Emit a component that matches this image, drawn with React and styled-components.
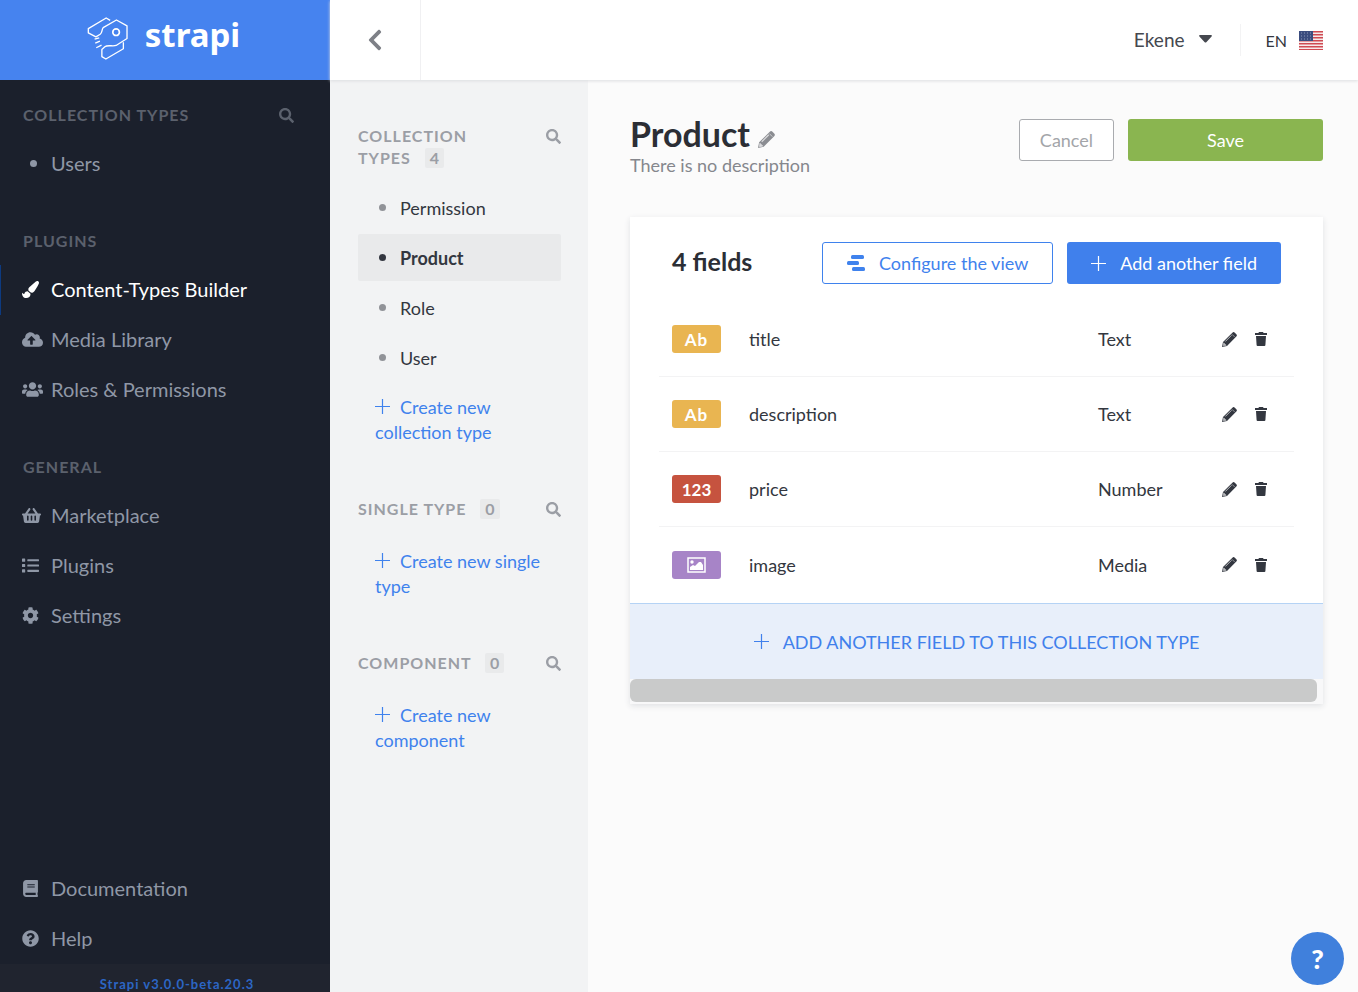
import styled, { createGlobalStyle } from "styled-components";
import {
  FaBook,
  FaChevronLeft,
  FaCloudUploadAlt,
  FaCog,
  FaList,
  FaPaintBrush,
  FaQuestionCircle,
  FaSearch,
  FaShoppingBasket,
  FaUsers,
} from "react-icons/fa";

const GlobalStyle = createGlobalStyle`
  * {
    box-sizing: border-box;
  }
  body {
    margin: 0;
    font-family: Lato, "Open Sans", sans-serif;
    font-size: 18px;
    color: #333740;
    background: #fbfbfb;
  }
  button {
    font: inherit;
    cursor: pointer;
  }
  a {
    text-decoration: none;
  }
  ul {
    list-style: none;
    margin: 0;
    padding: 0;
  }
  svg {
    display: block;
    flex: none;
  }
`;

const Page = styled.div`
  display: grid;
  grid-template-columns: 330px minmax(0, 1fr);
  min-height: 100vh;
`;

/* left menu */

const Sidebar = styled.nav`
  display: flex;
  flex-direction: column;
  background: #1b202c;
`;

const Brand = styled.a`
  display: flex;
  align-items: center;
  justify-content: center;
  gap: 16px;
  height: 80px;
  padding: 0 4px 4px 0;
  color: #ffffff;
  background: #4683ef;
`;

const BrandName = styled.span`
  padding-bottom: 6px;
  font-family: "Noto Sans", sans-serif;
  font-size: 33px;
  font-weight: 700;
  line-height: 40px;
`;

const MenuTitle = styled.div`
  display: flex;
  align-items: center;
  justify-content: space-between;
  padding: ${({ $first }) => ($first ? "23px" : "40px")} 36px 12px 23px;
  font-size: 16px;
  font-weight: 700;
  line-height: 24px;
  letter-spacing: 1px;
  color: #5b616d;
`;

const MenuLink = styled.a`
  display: flex;
  align-items: center;
  height: 50px;
  padding: 0 0 2px 22px;
  font-size: 20px;
  color: ${({ $active }) => ($active ? "#ffffff" : "#8f97a6")};
  box-shadow: ${({ $active }) => ($active ? "inset 1px 0 #0d3a80" : "none")};
`;

const MenuIcon = styled.span`
  display: flex;
  width: 29px;
`;

const MenuDot = styled.span`
  width: 7px;
  height: 7px;
  margin-left: 8px;
  border-radius: 50%;
  background: #8f97a6;
`;

const MenuBottom = styled.div`
  margin-top: auto;
`;

const Version = styled.div`
  padding: 12px 0 0 24px;
  font-size: 13px;
  font-weight: 700;
  line-height: 16px;
  letter-spacing: 1px;
  text-align: center;
  background: #20242f;

  a {
    color: #2c66c4;
  }
`;

/* top bar */

const Content = styled.div`
  display: flex;
  flex-direction: column;
`;

const TopBar = styled.header`
  display: flex;
  align-items: center;
  height: 80px;
  padding-right: 35px;
  background: #ffffff;
  box-shadow: 0 1px 3px #dcdde0;
  z-index: 1;
`;

const BackButton = styled.button`
  display: flex;
  align-items: center;
  justify-content: center;
  width: 91px;
  height: 80px;
  border: 0;
  border-right: 1px solid #f0f0f2;
  color: #7e8087;
  background: none;
`;

const UserButton = styled.button`
  display: flex;
  align-items: center;
  gap: 14px;
  height: 32px;
  margin-left: auto;
  padding: 0 28px 2px 0;
  border: 0;
  border-right: 1px solid #f3f3f4;
  font-size: 19px;
  color: #45484f;
  background: none;
`;

const LangButton = styled.button`
  display: flex;
  align-items: center;
  gap: 12px;
  padding: 0 0 0 25px;
  border: 0;
  font-size: 16px;
  color: #333740;
  background: none;
`;

/* builder */

const Builder = styled.div`
  display: grid;
  grid-template-columns: 258px minmax(0, 1fr);
  flex: 1;
`;

const TypesMenu = styled.aside`
  display: flex;
  flex-direction: column;
  gap: 53px;
  padding: 45px 27px 40px 28px;
  background: #f2f3f4;
`;

const TypesTitle = styled.div`
  display: flex;
  justify-content: space-between;
  padding-bottom: 15px;
  font-size: 16px;
  font-weight: 700;
  line-height: 22px;
  letter-spacing: 1px;
  color: #9b9ea5;

  svg {
    margin-top: 4px;
  }
`;

const TitleText = styled.span`
  max-width: 150px;
`;

const Count = styled.span`
  display: inline-block;
  margin-left: 9px;
  padding: 0 4px 0 5px;
  border-radius: 2px;
  line-height: 20px;
  background: #e9eaeb;
`;

const TypeLink = styled.a`
  display: flex;
  align-items: center;
  gap: 14px;
  height: 47px;
  margin-bottom: 3px;
  padding: 0 0 0 21px;
  border-radius: 2px;
  line-height: 24px;
  font-weight: ${({ $active }) => ($active ? 700 : 400)};
  color: #333740;
  background: ${({ $active }) => ($active ? "#e9eaeb" : "none")};

  &:before {
    content: "";
    width: 7px;
    height: 7px;
    border-radius: 50%;
    background: ${({ $active }) => ($active ? "#333740" : "#919398")};
  }
`;

const CreateLink = styled.a`
  display: block;
  margin: 14px 0 0 17px;
  line-height: 25px;
  color: #3f82ed;

  svg {
    display: inline-block;
    margin-right: 10px;
  }
`;

const Main = styled.main`
  padding: 39px 35px 40px 42px;
`;

const PageHeader = styled.div`
  display: flex;
  justify-content: space-between;
  margin-bottom: 40px;
`;

const PageTitle = styled.h1`
  display: flex;
  align-items: center;
  gap: 8px;
  margin: 0;
  padding-bottom: 4px;
  font-size: 34px;
  font-weight: 700;
  line-height: 30px;
  color: #2b2e35;

  svg {
    margin-top: 10px;
    color: #8b8d92;
  }
`;

const Subtitle = styled.p`
  margin: 0;
  line-height: 24px;
  color: #85878d;
`;

const Actions = styled.div`
  display: flex;
  gap: 14px;
`;

const Button = styled.button`
  display: flex;
  align-items: center;
  justify-content: center;
  gap: 14px;
  height: 42px;
  padding: 0 ${({ $pad }) => $pad || "24px"};
  border: ${({ $border }) => ($border ? `1px solid ${$border}` : "0")};
  border-radius: 3px;
  color: ${({ $color }) => $color};
  background: ${({ $bg }) => $bg || "#ffffff"};
`;

const Card = styled.section`
  background: #ffffff;
  box-shadow: 0 2px 6px #e0e1e4;
`;

const CardHeader = styled.div`
  display: flex;
  align-items: center;
  justify-content: space-between;
  padding: 25px 42px 18px;

  h2 {
    margin: 0;
    padding-bottom: 4px;
    font-size: 25px;
    font-weight: 700;
    line-height: 36px;
    color: #2b2e35;
  }
`;

const TableWrap = styled.div`
  padding: 0 29px 1px;
`;

const Table = styled.table`
  width: 100%;
  border-collapse: separate;
  border-spacing: 0;
  table-layout: fixed;

  td {
    height: 75px;
    padding: 0;
    border-bottom: 1px solid #f3f3f4;
  }
  tr:last-child td {
    border-bottom: 0;
  }
`;

const TypeBadge = styled.span`
  display: flex;
  align-items: center;
  justify-content: center;
  width: 49px;
  height: 28px;
  margin-left: 13px;
  border-radius: 3px;
  font-size: 17px;
  font-weight: 700;
  letter-spacing: ${({ $spaced }) => ($spaced ? "1px" : "0")};
  color: #ffffff;
  background: ${({ $bg }) => $bg};
`;

const RowActions = styled.div`
  display: flex;
  align-items: center;
  justify-content: flex-end;
  gap: 18px;
  padding-right: 27px;

  button {
    padding: 0;
    border: 0;
    color: #333740;
    background: none;
  }
`;

const AddRow = styled.button`
  display: flex;
  align-items: center;
  justify-content: center;
  gap: 14px;
  width: 100%;
  height: 76px;
  border: 0;
  border-top: 1px solid #b5d3f5;
  color: #4080ec;
  background: #e8effa;
`;

const ScrollTrack = styled.div`
  padding: 0 6px 2px 0;
  background: #f8f8f9;
`;

const ScrollThumb = styled.div`
  height: 23px;
  border-radius: 6px;
  background: #c9caca;
`;

const HelpButton = styled.button`
  position: fixed;
  right: 14px;
  bottom: 7px;
  width: 53px;
  height: 53px;
  padding: 0;
  border: 0;
  border-radius: 50%;
  font-size: 27px;
  font-weight: 900;
  color: #ffffff;
  background: #4080dc;
`;

const StrapiMark = () => (
  <svg width="43" height="45" viewBox="0 0 130 134" fill="none" stroke="#fff" strokeWidth="4" strokeLinejoin="round">
    <path d="M73 12 61 5 7 37v13l23 12 13-8c7-4 4-14 9-20l40-23 32 18v38L91 88c-10 4-26-3-34 4l-9 8v22l12 7 53-31V78" />
    <circle cx="91" cy="48" r="10" strokeWidth="5" />
    <path d="M26 69l14-4M28 81l14-6M31 95l16-8" />
  </svg>
);

const PlusIcon = () => (
  <svg width="15" height="15" viewBox="0 0 15 15" stroke="currentColor">
    <path d="M7.5 0v15M0 7.5h15" strokeWidth="1.2" />
  </svg>
);

const CaretIcon = () => (
  <svg width="13" height="8" viewBox="0 0 13 8" fill="currentColor">
    <path d="M1 0h11c.9 0 1.200.9.6 1.500L7.300 7.200a1.100 1.100 0 0 1-1.600 0L.4 1.500C-.2.9.1 0 1 0z" />
  </svg>
);

const LayoutIcon = () => (
  <svg width="18" height="16" viewBox="0 0 18 16" fill="currentColor">
    <rect x="4" y="0" width="13" height="4" rx="1.5" />
    <rect x="0" y="6" width="12" height="4" rx="1.5" />
    <rect x="5" y="12" width="13" height="4" rx="1.5" />
  </svg>
);

const PencilIcon = ({ size = 15, inner = "#b9babd" }) => (
  <svg width={size} height={size} viewBox="0 0 15 15">
    <path fill="currentColor" d="M0 15l1-5L10.400.7a1.700 1.700 0 0 1 2.400 0l1.500 1.500a1.700 1.700 0 0 1 0 2.400L5 14z" />
    <path d="M3.300 9.500l6.200-6.200" stroke={inner} strokeWidth="1" />
    <path d="M10 2.300l2.700 2.700M1.700 10.800l2.500 2.500-2.900.5z" stroke={inner} strokeWidth=".7" fill={inner} />
  </svg>
);

const TrashIcon = () => (
  <svg width="12" height="14" viewBox="0 0 12 14" fill="currentColor">
    <path d="M4 0h4l.6 1H12v2H0V1h3.400zM1 4h10l-.6 9a1 1 0 0 1-1 1H2.600a1 1 0 0 1-1-1z" />
  </svg>
);

const ImageIcon = () => (
  <svg width="19" height="16" viewBox="0 0 19 16">
    <rect x="1" y="1" width="17" height="14" fill="none" stroke="#fff" strokeWidth="1.500" />
    <circle cx="5" cy="5" r="1.700" fill="#fff" />
    <path d="M3 13v-3l3-2 2 1 4-4h2l2 3v5z" fill="#fff" />
  </svg>
);

const FlagIcon = () => (
  <svg width="24" height="19" viewBox="0 0 24 19">
    <rect width="24" height="19" fill="#f6eaea" />
    {[0, 3, 6, 9, 12, 15, 18].map((y) => (
      <rect key={y} y={y} width="24" height="1.5" fill="#cf4a52" />
    ))}
    <rect width="14" height="10" fill="#3b4d7f" />
    {[2, 5, 8].map((y) => (
      <path key={y} d={`M2 ${y}h11`} stroke="#a3adc9" strokeWidth=".8" strokeDasharray="1 2" />
    ))}
  </svg>
);

const plugins = [
  { label: "Content-Types Builder", icon: <FaPaintBrush size={17} />, active: true },
  { label: "Media Library", icon: <FaCloudUploadAlt size={21} /> },
  { label: "Roles & Permissions", icon: <FaUsers size={21} /> },
];

const general = [
  { label: "Marketplace", icon: <FaShoppingBasket size={19} /> },
  { label: "Plugins", icon: <FaList size={17} /> },
  { label: "Settings", icon: <FaCog size={17} /> },
];

const bottom = [
  { label: "Documentation", icon: <FaBook size={17} /> },
  { label: "Help", icon: <FaQuestionCircle size={17} /> },
];

const types = [
  { title: "Collection Types", items: ["Permission", "Product", "Role", "User"], create: "Create new collection type" },
  { title: "Single Type", items: [], create: "Create new single type" },
  { title: "Component", items: [], create: "Create new component" },
];

const fields = [
  { name: "title", type: "Text", badge: "Ab", color: "#e9b551" },
  { name: "description", type: "Text", badge: "Ab", color: "#e9b551" },
  { name: "price", type: "Number", badge: "123", color: "#c6533f" },
  { name: "image", type: "Media", badge: <ImageIcon />, color: "#a784c7" },
];

const MenuItems = ({ items }) => (
  <ul>
    {items.map(({ label, icon, active }) => (
      <li key={label}>
        <MenuLink href="#" $active={active}>
          <MenuIcon>{icon}</MenuIcon>
          {label}
        </MenuLink>
      </li>
    ))}
  </ul>
);

const App = () => {
  return (
    <Page>
      <GlobalStyle />
      <Sidebar>
        <Brand href="#">
          <StrapiMark />
          <BrandName>strapi</BrandName>
        </Brand>
        <MenuTitle $first>
          COLLECTION TYPES
          <FaSearch size={15} />
        </MenuTitle>
        <MenuItems items={[{ label: "Users", icon: <MenuDot /> }]} />
        <MenuTitle>PLUGINS</MenuTitle>
        <MenuItems items={plugins} />
        <MenuTitle>GENERAL</MenuTitle>
        <MenuItems items={general} />
        <MenuBottom>
          <MenuItems items={bottom} />
          <Version>
            <a href="#">Strapi v3.0.0-beta.20.3</a>
          </Version>
        </MenuBottom>
      </Sidebar>
      <Content>
        <TopBar>
          <BackButton aria-label="Back">
            <FaChevronLeft size={24} />
          </BackButton>
          <UserButton>
            Ekene
            <CaretIcon />
          </UserButton>
          <LangButton>
            EN
            <FlagIcon />
          </LangButton>
        </TopBar>
        <Builder>
          <TypesMenu>
            {types.map(({ title, items, create }) => (
              <div key={title}>
                <TypesTitle>
                  <TitleText>
                    {title.toUpperCase()} <Count>{items.length}</Count>
                  </TitleText>
                  <FaSearch size={15} />
                </TypesTitle>
                <ul>
                  {items.map((item) => (
                    <li key={item}>
                      <TypeLink href="#" $active={item === "Product"}>
                        {item}
                      </TypeLink>
                    </li>
                  ))}
                </ul>
                <CreateLink href="#">
                  <PlusIcon />
                  {create}
                </CreateLink>
              </div>
            ))}
          </TypesMenu>
          <Main>
            <PageHeader>
              <div>
                <PageTitle>
                  Product
                  <PencilIcon size={17} inner="#dcdcde" />
                </PageTitle>
                <Subtitle>There is no description</Subtitle>
              </div>
              <Actions>
                <Button $color="#a3a5a9" $border="#a9abaf" $pad="20px">
                  Cancel
                </Button>
                <Button $color="#ffffff" $bg="#8ab550" $pad="79px">
                  Save
                </Button>
              </Actions>
            </PageHeader>
            <Card>
              <CardHeader>
                <h2>4 fields</h2>
                <Actions>
                  <Button $color="#3f82ed" $border="#3f82ed">
                    <LayoutIcon />
                    Configure the view
                  </Button>
                  <Button $color="#ffffff" $bg="#4080ec">
                    <PlusIcon />
                    Add another field
                  </Button>
                </Actions>
              </CardHeader>
              <TableWrap>
                <Table>
                  <colgroup>
                    <col width="90" />
                    <col />
                    <col width="116" />
                    <col width="80" />
                  </colgroup>
                  <tbody>
                    {fields.map(({ name, type, badge, color }) => (
                      <tr key={name}>
                        <td>
                          <TypeBadge $bg={color} $spaced={badge === "Ab"}>
                            {badge}
                          </TypeBadge>
                        </td>
                        <td>{name}</td>
                        <td>{type}</td>
                        <td>
                          <RowActions>
                            <button aria-label={`Edit ${name}`}>
                              <PencilIcon />
                            </button>
                            <button aria-label={`Delete ${name}`}>
                              <TrashIcon />
                            </button>
                          </RowActions>
                        </td>
                      </tr>
                    ))}
                  </tbody>
                </Table>
              </TableWrap>
              <AddRow>
                <PlusIcon />
                ADD ANOTHER FIELD TO THIS COLLECTION TYPE
              </AddRow>
              <ScrollTrack>
                <ScrollThumb />
              </ScrollTrack>
            </Card>
          </Main>
        </Builder>
      </Content>
      <HelpButton aria-label="Help">?</HelpButton>
    </Page>
  );
};

export default App;
